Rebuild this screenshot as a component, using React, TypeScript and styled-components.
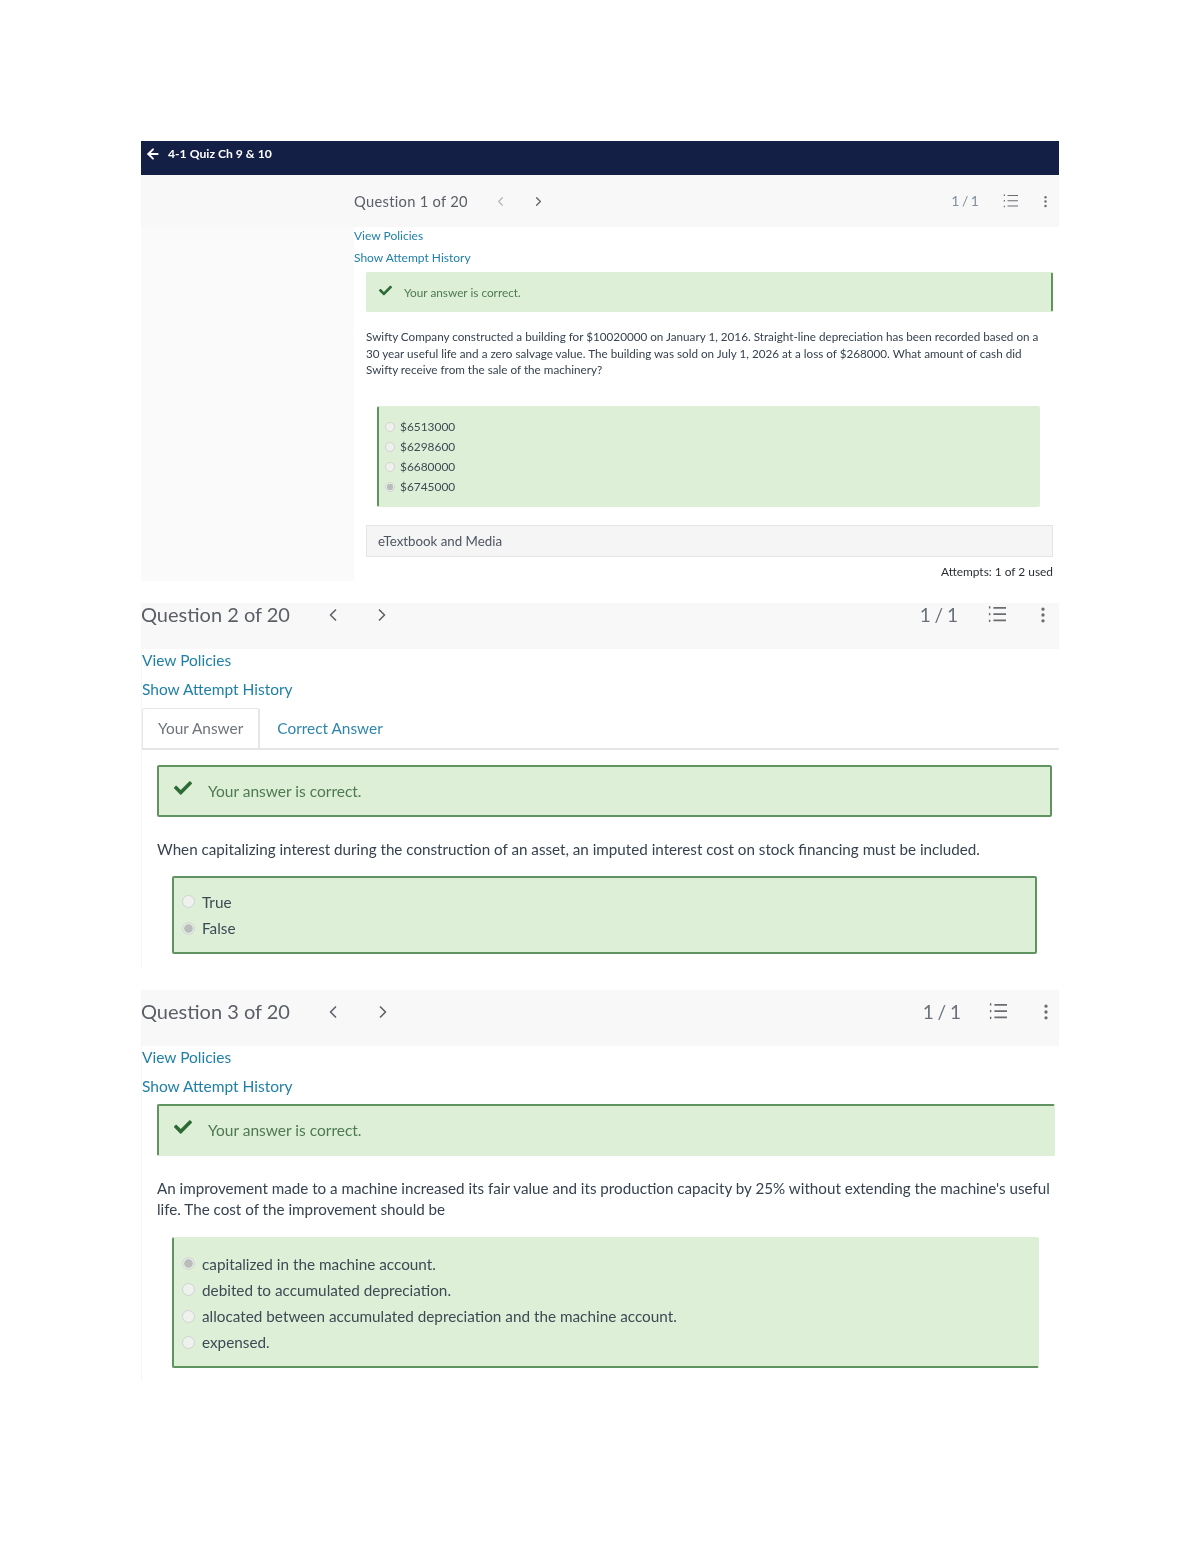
import React from "react";
import styled, { createGlobalStyle, css } from "styled-components";
import { ArrowLeft, ChevronLeft, ChevronRight, MoreVertical } from "lucide-react";
import { FaCheck } from "react-icons/fa";

type Side = "top" | "right" | "bottom" | "left";

const ALL_SIDES: Side[] = ["top", "right", "bottom", "left"];

const GlobalStyle = createGlobalStyle`
  html, body {
    margin: 0;
    background: #fff;
  }
  body {
    font-family: Lato, "Open Sans", "Liberation Sans", sans-serif;
    color: #3c4a5a;
  }
`;

const Page = styled.div`
  width: 918px;
  min-height: 1412px;
  margin: 0 auto;
  padding-top: 141px;
  filter: blur(0.6px);
`;

const Header = styled.header`
  height: 34px;
  background: #141f45;
  color: #fff;
  display: flex;
  align-items: center;
  gap: 7px;
  padding: 0 0 9px 4px;
  box-sizing: border-box;
  font-size: 12.2px;
  font-weight: 700;
`;

const Bar = styled.div<{ $height: number; $top: number; $inset: number; $large?: boolean }>`
  height: ${(p) => p.$height}px;
  padding: ${(p) => p.$top}px 0 0 ${(p) => p.$inset}px;
  box-sizing: border-box;
  background: #f8f8f8;
  display: flex;
  align-items: ${(p) => (p.$large ? "flex-start" : "center")};
  color: #5a5f66;
`;

const BarTitle = styled.span<{ $large?: boolean }>`
  font-size: ${(p) => (p.$large ? "20px" : "14.7px")};
  line-height: ${(p) => (p.$large ? "22px" : "24px")};
  white-space: nowrap;
  letter-spacing: ${(p) => (p.$large ? "0" : "0.3px")};
`;

const NavButton = styled.span<{ $gap: number; $faded?: boolean }>`
  display: flex;
  margin-left: ${(p) => p.$gap}px;
  color: ${(p) => (p.$faded ? "#b4b7bb" : "#5f6368")};
  height: 24px;
  align-items: center;
`;

const Score = styled.span<{ $large?: boolean; $right: number }>`
  margin-left: auto;
  margin-right: ${(p) => p.$right}px;
  font-size: ${(p) => (p.$large ? "19px" : "14px")};
  line-height: 24px;
  word-spacing: -1px;
  color: ${(p) => (p.$large ? "#6a7078" : "#7d919e")};
  white-space: nowrap;
`;

const IconSlot = styled.span<{ $right: number }>`
  display: flex;
  height: 24px;
  align-items: center;
  margin-right: ${(p) => p.$right}px;
  color: #6a6d70;
`;

const Section = styled.section<{ $top: number }>`
  margin-top: ${(p) => p.$top}px;
`;

const Split = styled.div`
  display: grid;
  grid-template-columns: 213px 1fr;
`;

const Sidebar = styled.aside`
  background: #fafafa;
`;

const SmallBody = styled.div`
  min-width: 0;
  padding-bottom: 2px;
`;

const LargeBody = styled.div<{ $bottom: number }>`
  border-left: 1px solid #f5f5f5;
  padding-bottom: ${(p) => p.$bottom}px;
`;

const PolicyLink = styled.a<{ $large?: boolean; $gap?: number }>`
  display: block;
  margin-top: ${(p) => p.$gap ?? 0}px;
  font-size: ${(p) => (p.$large ? "15.5px" : "12px")};
  line-height: ${(p) => (p.$large ? "22px" : "18px")};
  color: #1f7fa8;
  text-decoration: none;
`;

const greenEdges = css<{ $sides: Side[] }>`
  border: 1px solid #deefd7;
  ${(p) =>
    p.$sides.map((side) => `border-${side}: 2px solid #5f9460;`).join("\n")}
`;

const Alert = styled.div<{
  $sides: Side[];
  $left: number;
  $right: number;
  $top: number;
  $height: number;
  $large?: boolean;
}>`
  ${greenEdges}
  box-sizing: border-box;
  height: ${(p) => p.$height}px;
  margin: ${(p) => p.$top}px ${(p) => p.$right}px 0 ${(p) => p.$left}px;
  padding-left: ${(p) => (p.$large ? "15px" : "12px")};
  background: #deefd7;
  border-radius: 2px;
  display: flex;
  align-items: center;
  gap: ${(p) => (p.$large ? "16px" : "12px")};
  font-size: ${(p) => (p.$large ? "15.5px" : "11.8px")};
  color: #4d7a52;
  svg {
    color: #2e6b34;
    margin-top: ${(p) => (p.$large ? "-6px" : "-4px")};
    flex: none;
  }
`;

const QuestionText = styled.p<{ $left: number; $right: number; $top: number; $large?: boolean }>`
  margin: ${(p) => p.$top}px ${(p) => p.$right}px 0 ${(p) => p.$left}px;
  font-size: ${(p) => (p.$large ? "15.2px" : "11.7px")};
  line-height: ${(p) => (p.$large ? "21px" : "16.5px")};
  color: #36424f;
`;

const Options = styled.div<{
  $sides: Side[];
  $left: number;
  $right: number;
  $top: number;
  $height: number;
  $pad: number;
  $row: number;
}>`
  ${greenEdges}
  box-sizing: border-box;
  height: ${(p) => p.$height}px;
  margin: ${(p) => p.$top}px ${(p) => p.$right}px 0 ${(p) => p.$left}px;
  padding: ${(p) => p.$pad}px 0 0 6px;
  background: #deefd7;
  border-radius: 2px;
  line-height: ${(p) => p.$row}px;
`;

const OptionRow = styled.label<{ $large?: boolean }>`
  display: flex;
  align-items: center;
  gap: ${(p) => (p.$large ? "7px" : "5px")};
  font-size: ${(p) => (p.$large ? "15.3px" : "11.9px")};
  color: #3d4a55;
  padding-left: ${(p) => (p.$large ? "2px" : "0")};
`;

const Radio = styled.span<{ $on?: boolean; $large?: boolean }>`
  width: ${(p) => (p.$large ? "13px" : "10px")};
  height: ${(p) => (p.$large ? "13px" : "10px")};
  border-radius: 50%;
  box-sizing: border-box;
  border: 1px solid #d0d4d0;
  background: ${(p) =>
    p.$on
      ? "radial-gradient(circle, #b9bdb9 0 50%, #e8ece8 60%)"
      : "#eef1ee"};
`;

const TextbookPanel = styled.div`
  margin: 18px 6px 0 12px;
  height: 32px;
  box-sizing: border-box;
  padding-left: 11px;
  display: flex;
  align-items: center;
  background: #f5f5f5;
  border: 1px solid #e4e4e4;
  font-size: 13.3px;
  color: #4d5560;
`;

const Attempts = styled.div`
  margin: 8px 6px 0 0;
  text-align: right;
  font-size: 11.9px;
  line-height: 14px;
  color: #2b2f33;
`;

const Tabs = styled.div`
  display: flex;
  align-items: stretch;
  height: 42px;
  margin-top: 8px;
  border-bottom: 2px solid #e6e6e6;
  box-sizing: border-box;
`;

const Tab = styled.span<{ $active?: boolean }>`
  display: flex;
  align-items: center;
  padding: 0 15px;
  font-size: 15.4px;
  color: ${(p) => (p.$active ? "#6d747a" : "#2f86ad")};
  ${(p) =>
    p.$active &&
    css`
      border: 1px solid #e6e6e6;
      border-bottom: none;
      border-right-width: 2px;
      border-radius: 3px 3px 0 0;
      margin-right: 2px;
    `}
`;

const ListIcon = ({ size, weight }: { size: number; weight: number }) => (
  <svg width={size} height={size * 0.9} viewBox="0 0 20 18" fill="none" stroke="currentColor">
    <path d="M1 1.5h1.6M1 9h1.6M1 16.5h1.6" strokeWidth={weight + 0.4} />
    <path d="M6 2h14M6 9h14M6 16h14" strokeWidth={weight} />
  </svg>
);

type BarProps = {
  title: string;
  height: number;
  top: number;
  inset?: number;
  large?: boolean;
  prevGap: number;
  nextGap: number;
  scoreRight: number;
  listRight: number;
  dotsRight: number;
};

const QuestionBar = ({
  title,
  height,
  top,
  inset = 0,
  large,
  prevGap,
  nextGap,
  scoreRight,
  listRight,
  dotsRight,
}: BarProps) => {
  const chevron = large ? 20 : 15;
  return (
    <Bar $height={height} $top={top} $inset={inset} $large={large}>
      <BarTitle $large={large}>{title}</BarTitle>
      <NavButton $gap={prevGap} $faded={!large}>
        <ChevronLeft size={chevron} />
      </NavButton>
      <NavButton $gap={nextGap}>
        <ChevronRight size={chevron} />
      </NavButton>
      <Score $large={large} $right={scoreRight}>
        1 / 1
      </Score>
      <IconSlot $right={listRight}>
        <ListIcon size={large ? 18 : 15} weight={large ? 2 : 1.6} />
      </IconSlot>
      <IconSlot $right={dotsRight}>
        <MoreVertical size={large ? 20 : 15} />
      </IconSlot>
    </Bar>
  );
};

export default function App() {
  return (
    <Page>
      <GlobalStyle />
      <Header>
        <ArrowLeft size={16} strokeWidth={2.8} />
        <span>4-1 Quiz Ch 9 &amp; 10</span>
      </Header>

      <Section $top={0}>
        <QuestionBar
          title="Question 1 of 20"
          height={52}
          top={0}
          inset={213}
          prevGap={25}
          nextGap={23}
          scoreRight={24}
          listRight={20}
          dotsRight={6}
        />
        <Split>
          <Sidebar />
          <SmallBody>
            <PolicyLink>View Policies</PolicyLink>
            <PolicyLink $gap={4}>Show Attempt History</PolicyLink>
            <Alert $sides={["right"]} $left={12} $right={6} $top={5} $height={40}>
              <FaCheck size={13} />
              <span>Your answer is correct.</span>
            </Alert>
            <QuestionText $left={12} $right={14} $top={16}>
              Swifty Company constructed a building for $10020000 on January 1, 2016.
              Straight-line depreciation has been recorded based on a 30 year useful life and a
              zero salvage value. The building was sold on July 1, 2026 at a loss of $268000. What
              amount of cash did Swifty receive from the sale of the machinery?
            </QuestionText>
            <Options $sides={["left"]} $left={23} $right={19} $top={28} $height={101} $pad={10} $row={20}>
              <OptionRow><Radio />$6513000</OptionRow>
              <OptionRow><Radio />$6298600</OptionRow>
              <OptionRow><Radio />$6680000</OptionRow>
              <OptionRow><Radio $on />$6745000</OptionRow>
            </Options>
            <TextbookPanel>eTextbook and Media</TextbookPanel>
            <Attempts>Attempts: 1 of 2 used</Attempts>
          </SmallBody>
        </Split>
      </Section>

      <Section $top={22}>
        <QuestionBar
          title="Question 2 of 20"
          height={46}
          top={0}
          large
          prevGap={33}
          nextGap={29}
          scoreRight={30}
          listRight={27}
          dotsRight={6}
        />
        <LargeBody $bottom={13}>
          <PolicyLink $large>View Policies</PolicyLink>
          <PolicyLink $large $gap={7}>Show Attempt History</PolicyLink>
          <Tabs>
            <Tab $active>Your Answer</Tab>
            <Tab>Correct Answer</Tab>
          </Tabs>
          <Alert $sides={ALL_SIDES} $large $left={15} $right={7} $top={15} $height={52}>
            <FaCheck size={18} />
            <span>Your answer is correct.</span>
          </Alert>
          <QuestionText $large $left={15} $right={7} $top={22}>
            When capitalizing interest during the construction of an asset, an imputed interest
            cost on stock financing must be included.
          </QuestionText>
          <Options $sides={ALL_SIDES} $left={30} $right={22} $top={16} $height={78} $pad={11} $row={26.5}>
            <OptionRow $large><Radio $large />True</OptionRow>
            <OptionRow $large><Radio $large $on />False</OptionRow>
          </Options>
        </LargeBody>
      </Section>

      <Section $top={23}>
        <QuestionBar
          title="Question 3 of 20"
          height={56}
          top={10}
          large
          prevGap={33}
          nextGap={30}
          scoreRight={28}
          listRight={29}
          dotsRight={3}
        />
        <LargeBody $bottom={12}>
          <PolicyLink $large>View Policies</PolicyLink>
          <PolicyLink $large $gap={7}>Show Attempt History</PolicyLink>
          <Alert $sides={["top", "left"]} $large $left={15} $right={4} $top={7} $height={52}>
            <FaCheck size={18} />
            <span>Your answer is correct.</span>
          </Alert>
          <QuestionText $large $left={15} $right={4} $top={22}>
            An improvement made to a machine increased its fair value and its production capacity
            by 25% without extending the machine's useful life. The cost of the improvement should
            be
          </QuestionText>
          <Options $sides={["bottom", "left"]} $left={30} $right={20} $top={17} $height={131} $pad={13} $row={26.3}>
            <OptionRow $large><Radio $large $on />capitalized in the machine account.</OptionRow>
            <OptionRow $large><Radio $large />debited to accumulated depreciation.</OptionRow>
            <OptionRow $large><Radio $large />allocated between accumulated depreciation and the machine account.</OptionRow>
            <OptionRow $large><Radio $large />expensed.</OptionRow>
          </Options>
        </LargeBody>
      </Section>
    </Page>
  );
}
